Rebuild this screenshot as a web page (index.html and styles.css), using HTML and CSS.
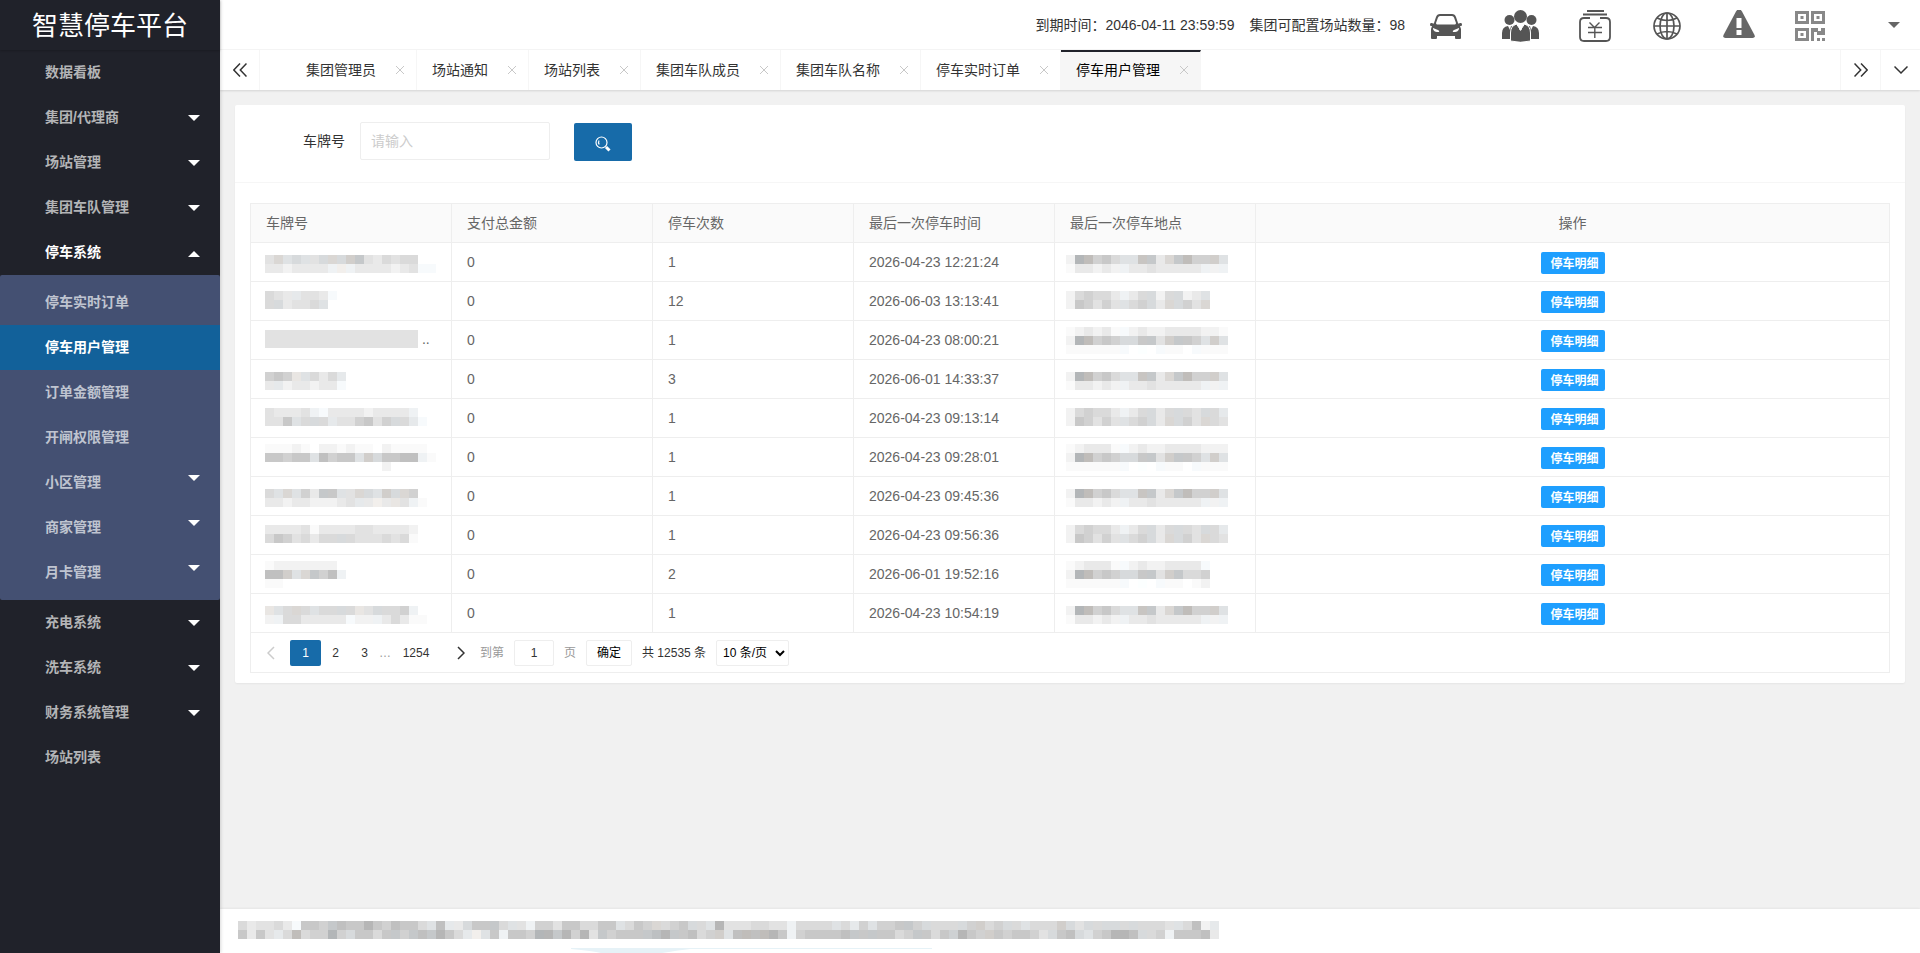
FILE: index.html
```html
<!DOCTYPE html>
<html lang="zh-CN">
<head>
<meta charset="utf-8">
<title>智慧停车平台</title>
<link rel="stylesheet" href="styles.css">
</head>
<body>
<div class="app">
  <aside class="side">
    <h1 class="logo">智慧停车平台</h1>
    <nav class="menu">
      <a class="item" href="#">数据看板</a>
      <a class="item" href="#">集团/代理商<i class="caret"></i></a>
      <a class="item" href="#">场站管理<i class="caret"></i></a>
      <a class="item" href="#">集团车队管理<i class="caret"></i></a>
      <a class="item open" href="#">停车系统<i class="caret up"></i></a>
      <div class="submenu">
        <a class="item" href="#">停车实时订单</a>
        <a class="item current" href="#">停车用户管理</a>
        <a class="item" href="#">订单金额管理</a>
        <a class="item" href="#">开闸权限管理</a>
        <a class="item" href="#">小区管理<i class="caret"></i></a>
        <a class="item" href="#">商家管理<i class="caret"></i></a>
        <a class="item" href="#">月卡管理<i class="caret"></i></a>
      </div>
      <a class="item" href="#">充电系统<i class="caret"></i></a>
      <a class="item" href="#">洗车系统<i class="caret"></i></a>
      <a class="item" href="#">财务系统管理<i class="caret"></i></a>
      <a class="item" href="#">场站列表</a>
    </nav>
  </aside>

  <div class="main">
    <header class="header">
      <span>到期时间：2046-04-11 23:59:59</span>
      <span class="quota">集团可配置场站数量：98</span>
      <div class="tools">
        <a href="#" aria-label="车辆"><svg width="32" height="32" viewBox="0 0 32 32"><path fill="#555" fill-rule="evenodd" d="M10 4h12q3 0 4 3l2 6 1 1 .5-1H31q1 0 1 1.500t-1 1.500h-1l1 3v9q0 1-1 1h-4q-1 0-1-1v-2H7v2q0 1-1 1H2q-1 0-1-1v-9l1-3H1q-1 0-1-1.500T1 13h1.500l.5 1 1-1 2-6q1-3 4-3zM10 6Q8.500 6 8 7.500L6 13q0 1 1 1.500h18q1-.5 1-1.500l-2-5.500Q23.500 6 22 6zM3 18v1q1 3 4 3h2q1-1-1-2zM29 18l-5 2q-2 1-1 2h2q3 0 4-3z"/></svg></a>
        <a href="#" aria-label="用户"><svg width="37" height="32" viewBox="0 0 37 32"><g fill="#555"><circle cx="7.500" cy="10" r="5"/><circle cx="29.500" cy="10" r="5"/><path d="M0 29v-6q0-6 6-7l2 4 1-4 2 1q-3 3-3 12zM37 29v-6q0-6-6-7l-2 4-1-4-2 1q3 3 3 12z"/><path stroke="#fff" d="M8.500 31v-8q0-7 6-9l4 6 4-6q6 2 6 9v8q-10 2.500-20 0z"/><circle cx="18.500" cy="6.500" r="6.500"/><path fill="#fff" d="M17.700 14h1.600l.7 5-1.500 2-1.500-2z"/></g></svg></a>
        <a href="#" aria-label="收款"><svg width="32" height="32" viewBox="0 0 32 32"><g fill="none" stroke="#555" stroke-width="1.800"><path d="M8 1h17M4 4.500h24M11 8H5q-4 0-4 4v15q0 4 4 4h22q4 0 4-4V12q0-4-4-4h-6"/><path stroke-width="1.400" d="M10.500 12.500l5 5 5-5M9 17.500h14M9 22.500h14M15.800 17v11"/></g></svg></a>
        <a href="#" aria-label="语言"><svg width="32" height="32" viewBox="0 0 32 32"><g fill="none" stroke="#555" stroke-width="1.700"><circle cx="16" cy="16" r="13"/><ellipse cx="16" cy="16" rx="7" ry="13"/><path d="M16 3v26M3 16h26M6 8q10 5 20 0M6 24q10-5 20 0"/></g></svg></a>
        <a href="#" aria-label="告警"><svg width="32" height="32" viewBox="0 0 32 32"><path fill="#666" d="M13 1.500q3-5 6 0L31.500 25q1 3-2 3h-27q-3 0-2-3z"/><path fill="#fff" d="M13.500 8h5v10h-5zM13.500 20h5v5h-5z"/></svg></a>
        <a href="#" aria-label="二维码"><svg width="30" height="32" viewBox="0 0 30 32"><path fill="#888" fill-rule="evenodd" d="M0 1h14v13H0zM3 4v7h8V4zM16 1h14v13H16zM19 4v7h8V4zM0 18h14v13H0zM3 21v7h8v-7zM5.500 6h3v3h-3zM21.500 6h3v3h-3zM5.500 23h3v3h-3zM16 18h7v3h3v-3h4v7h-8v-3h-3v9h-3zM22 28h3v3h-3zM27 28h3v3h-3z"/></svg></a>
      </div>
      <i class="user-caret"></i>
    </header>

    <div class="tabs">
      <button class="tab-btn left" aria-label="左移"><svg width="14" height="14" viewBox="0 0 14 14"><path d="M7 .5L.8 7 7 13.500M13.500 .5L7.300 7l6.200 6.500"/></svg></button>
      <div class="tab-list">
        <a class="tab" href="#">集团管理员<svg class="x" viewBox="0 0 8 8"><path d="M0 0l8 8M8 0L0 8"/></svg></a>
        <a class="tab" href="#">场站通知<svg class="x" viewBox="0 0 8 8"><path d="M0 0l8 8M8 0L0 8"/></svg></a>
        <a class="tab" href="#">场站列表<svg class="x" viewBox="0 0 8 8"><path d="M0 0l8 8M8 0L0 8"/></svg></a>
        <a class="tab" href="#">集团车队成员<svg class="x" viewBox="0 0 8 8"><path d="M0 0l8 8M8 0L0 8"/></svg></a>
        <a class="tab" href="#">集团车队名称<svg class="x" viewBox="0 0 8 8"><path d="M0 0l8 8M8 0L0 8"/></svg></a>
        <a class="tab" href="#">停车实时订单<svg class="x" viewBox="0 0 8 8"><path d="M0 0l8 8M8 0L0 8"/></svg></a>
        <a class="tab active" href="#">停车用户管理<svg class="x" viewBox="0 0 8 8"><path d="M0 0l8 8M8 0L0 8"/></svg></a>
      </div>
      <button class="tab-btn" aria-label="右移"><svg width="14" height="14" viewBox="0 0 14 14"><path d="M.5 .5L6.700 7 .5 13.500M7 .5L13.200 7 7 13.500"/></svg></button>
      <button class="tab-btn" aria-label="更多"><svg width="14" height="14" viewBox="0 0 14 14"><path d="M.5 3.500L7 10l6.500-6.500"/></svg></button>
    </div>

    <main class="content">
      <section class="card">
        <form class="search">
          <label for="plate">车牌号</label>
          <input id="plate" type="text" placeholder="请输入">
          <button type="button" aria-label="搜索"><svg width="16" height="16" viewBox="0 0 16 16"><circle cx="6.500" cy="6.500" r="5.500"/><path d="M4 4.500Q3 6.500 4.200 8.500"/><path class="handle" d="M11 11l3.500 3.500"/></svg></button>
        </form>
        <div class="list">
          <table>
            <thead>
              <tr><th class="col">车牌号</th><th class="col">支付总金额</th><th class="col">停车次数</th><th class="col">最后一次停车时间</th><th class="col">最后一次停车地点</th><th class="act">操作</th></tr>
            </thead>
            <tbody>
              <tr><td class="plate"><svg class="mask" data-top="6" data-cells="4Fefe4fFfGh435455/3323333cCc3333234bb"></svg></td><td>0</td><td>1</td><td>2026-04-23 12:21:24</td><td class="place"><svg class="mask" data-top="6" data-cells="2jI675eeHh3FhI66Ge/133232c33433333c2c"></svg></td><td class="act"><button class="detail">停车明细</button></td></tr>
              <tr><td class="plate"><svg class="mask" data-top="3" data-cells="543d443b/5f3445e"></svg></td><td>0</td><td>12</td><td>2026-06-03 13:13:41</td><td class="place"><svg class="mask" data-top="3" data-cells="256553c35f25f23e/276464e56f3Ff64F"></svg></td><td class="act"><button class="detail">停车明细</button></td></tr>
              <tr><td class="plate"><svg class="mask" data-top="3" data-cells="44444444444444444/44444444444444444"></svg> ..</td><td>0</td><td>1</td><td>2026-04-23 08:00:21</td><td class="place"><svg class="mask" data-top="0" data-cells="123231b23223333221/2jI676ff7h4Gh76eGe/111111b0a0b110b111"></svg></td><td class="act"><button class="detail">停车明细</button></td></tr>
              <tr><td class="plate"><svg class="mask" data-top="6" data-cells="676De535d/3d233233b"></svg></td><td>0</td><td>3</td><td>2026-06-01 14:33:37</td><td class="place"><svg class="mask" data-top="6" data-cells="2jI675eeHh3FhI66Ge/133232c33433333c2c"></svg></td><td class="act"><button class="detail">停车明细</button></td></tr>
              <tr><td class="plate"><svg class="mask" data-top="3" data-cells="43334cb333323333c/447e5f5d446746f5db"></svg></td><td>0</td><td>1</td><td>2026-04-23 09:13:14</td><td class="place"><svg class="mask" data-top="3" data-cells="256553c35f35f54f5d/276464e56f3Ff64F54"></svg></td><td class="act"><button class="detail">停车明细</button></td></tr>
              <tr><td class="plate"><svg class="mask" data-top="0" data-cells="1112102212110211110/77677e8677eGf7788c1/0000000000000200000"></svg></td><td>0</td><td>1</td><td>2026-04-23 09:28:01</td><td class="place"><svg class="mask" data-top="0" data-cells="123331b23223333222/2jI676ff7h4Gh76eGe/111111b0a0b110b111"></svg></td><td class="act"><button class="detail">停车明细</button></td></tr>
              <tr><td class="plate"><svg class="mask" data-top="6" data-cells="5eFe63h7e4FfeGfF6/3323322234d3C3D4c1"></svg></td><td>0</td><td>1</td><td>2026-04-23 09:45:36</td><td class="place"><svg class="mask" data-top="6" data-cells="2jI675eeHh3FhI66Ge/133232c33433333c2c"></svg></td><td class="act"><button class="detail">停车明细</button></td></tr>
              <tr><td class="plate"><svg class="mask" data-top="3" data-cells="33334133334433332/57645355f54445451"></svg></td><td>0</td><td>1</td><td>2026-04-23 09:56:36</td><td class="place"><svg class="mask" data-top="3" data-cells="256553c35f35f54f5d/276464e56f3Ff64F54"></svg></td><td class="act"><button class="detail">停车明细</button></td></tr>
              <tr><td class="plate"><svg class="mask" data-top="0" data-cells="12222222/88GeFh68c/11"></svg></td><td>0</td><td>2</td><td>2026-06-01 19:52:16</td><td class="place"><svg class="mask" data-top="0" data-cells="123331b23223333b/2jI676ff7h4Gh556/111111b0a0b11012"></svg></td><td class="act"><button class="detail">停车明细</button></td></tr>
              <tr><td class="plate"><svg class="mask" data-top="6" data-cells="De5F5e55f5D4f556c/2c5533333b22c35311"></svg></td><td>0</td><td>1</td><td>2026-04-23 10:54:19</td><td class="place"><svg class="mask" data-top="6" data-cells="2jI675eeHh3FhI66Ge/133232c33433333c2c"></svg></td><td class="act"><button class="detail">停车明细</button></td></tr>
            </tbody>
          </table>
          <div class="pager">
            <a class="arrow prev" href="#" aria-label="上一页"><svg width="8" height="14" viewBox="0 0 8 14"><path d="M7 1L1 7l6 6"/></svg></a>
            <a class="page on" href="#">1</a>
            <a class="page" href="#">2</a>
            <a class="page" href="#">3</a>
            <span class="dots">…</span>
            <a class="page last" href="#">1254</a>
            <a class="arrow next" href="#" aria-label="下一页"><svg width="8" height="14" viewBox="0 0 8 14"><path d="M1 1l6 6-6 6"/></svg></a>
            <label class="skip">到第<input type="text" value="1">页</label>
            <button class="go">确定</button>
            <span class="total">共 12535 条</span>
            <select aria-label="每页条数"><option>10 条/页</option></select>
          </div>
        </div>
      </section>
    </main>

    <footer class="footer">
      <svg class="mask" data-top="0" data-cells="534453b776h8779768775e8d3f77h5e4c664775577e576F567f5e94445544c5555e5d6e667h6f555f6G56f5e555Gf4f5ff5f5554e582d/7374d5I566j6f7757h6h8h975dCe7c776j9h9694h6777hi9h7856Ge8I8I97c677778h7h7756h757g976G767764f78fe67998f56c77783"></svg>
      <svg class="wave" width="361" height="5" viewBox="0 0 361 5"><path fill="#e6f2f7" d="M0 0h361v1H119q-10 1-28 4H30Q22 3 0 1z"/></svg>
    </footer>
  </div>
</div>
<script src="mask.js"></script>
</body>
</html>
```
FILE: styles.css
```css
* { box-sizing: border-box; }
body {
  margin: 0;
  font: 14px/24px "Liberation Sans", "Noto Sans CJK SC", sans-serif;
  color: #333;
  background: #f1f1f1;
}
a { color: inherit; text-decoration: none; }
button, input, select { font: inherit; margin: 0; }
button { cursor: pointer; }

.app { display: grid; grid-template-columns: 220px minmax(0, 1fr); min-height: 100vh; }

/* Sidebar */
.side { background: #20222a; box-shadow: 1px 0 3px rgba(0, 0, 0, .15); z-index: 1; }
.logo {
  margin: 0;
  height: 50px;
  padding-top: 2px;
  font-size: 26px;
  line-height: 48px;
  font-weight: 400;
  text-align: center;
  color: #fff;
  box-shadow: 0 1px 2px rgba(0, 0, 0, .2);
}
.item {
  display: flex;
  align-items: center;
  justify-content: space-between;
  height: 45px;
  padding: 0 20px 2px 45px;
  color: #b3b4b6;
  font-weight: 600;
}
.item.open { color: #fff; }
.caret { border: 6px solid transparent; border-top-color: #fff; border-bottom-width: 0; margin-top: 2px; }
.caret.up { border-bottom: 6px solid #fff; border-top-width: 0; margin-top: 5px; }
.submenu { padding: 5px 0; background: #445072; border-radius: 2px; }
.submenu .item { color: #bfc4d0; }
.submenu .item.current { color: #fff; background: #12619a; }
.submenu .caret { margin: 0 0 8px; }

/* Top bar */
.main { display: flex; flex-direction: column; min-width: 0; }
.header {
  display: flex;
  align-items: center;
  height: 50px;
  padding-right: 20px;
  justify-content: flex-end;
  background: #fff;
  border-bottom: 1px solid #f6f6f6;
}
.quota { margin-left: 15px; }
.tools { display: flex; gap: 40px; margin-left: 25px; padding-top: 2px; }
.tools a { display: flex; }
.user-caret { margin-left: 63px; border: 6px solid transparent; border-top-color: #666; border-bottom-width: 0; }

/* Tab strip */
.tabs { display: flex; height: 40px; background: #fff; box-shadow: 0 1px 2px rgba(0, 0, 0, .12); }
.tab-btn {
  width: 40px;
  padding: 0;
  display: flex;
  align-items: center;
  justify-content: center;
  background: none;
  border: 0;
  border-left: 1px solid #f6f6f6;
}
.tab-btn.left { border-left: 0; border-right: 1px solid #f6f6f6; }
.tab-btn path { fill: none; stroke: #333; stroke-width: 1.500; }
.tab-list { flex: 1; display: flex; padding-left: 31px; }
.tab {
  display: flex;
  align-items: center;
  padding: 0 12px 0 15px;
  border-right: 1px solid #f6f6f6;
}
.tab.active { background: #f6f6f6; color: #000; border-top: 2px solid #20222a; padding-bottom: 2px; }
.x { width: 8px; height: 8px; margin-left: 20px; overflow: visible; }
.x path { stroke: #c8c8c8; }

/* Card */
.content { flex: 1; padding: 15px; }
.card { background: #fff; border-radius: 2px; box-shadow: 0 1px 2px rgba(0, 0, 0, .05); }
.search { display: flex; padding: 17px 0 21px 68px; border-bottom: 1px solid #f6f6f6; }
.search label { line-height: 38px; }
.search input {
  width: 190px;
  height: 38px;
  margin-left: 15px;
  padding: 0 10px;
  border: 1px solid #eee;
  border-radius: 2px;
}
.search input::placeholder { color: #ccc; }
.search button {
  display: flex;
  align-items: center;
  justify-content: center;
  width: 58px;
  height: 38px;
  margin: 1px 0 0 24px;
  padding: 3px 0 0;
  border: 0;
  border-radius: 2px;
  background: #176ba9;
}
.search svg { fill: none; stroke: #fff; stroke-width: 1.200; }
.search .handle { stroke-width: 3; }
.list { padding: 20px 15px 10px; }

table { width: 100%; border-collapse: collapse; table-layout: fixed; color: #666; }
th, td { height: 39px; padding: 0 15px; border: 1px solid #eee; text-align: left; white-space: nowrap; line-height: 20px; }
th { font-weight: 400; background: #fafafa; }
.col { width: 201px; }
th.act, td.act { width: auto; text-align: center; }
.plate { padding: 0 0 0 14px; }
.place { padding: 0 0 0 11px; }
.mask { display: inline-block; vertical-align: middle; width: 0; height: 26px; overflow: visible; }
.detail {
  display: block;
  width: 64px;
  height: 22px;
  margin: 2px auto 0;
  padding: 1px 6px 0 10px;
  border: 0;
  border-radius: 2px;
  background: #1e9fff;
  color: #fff;
  font-size: 12px;
  line-height: 20px;
  font-weight: 600;
}

.pager {
  display: flex;
  align-items: center;
  height: 40px;
  border: 1px solid #eee;
  border-top: 0;
  font-size: 12px;
}
.pager path { fill: none; stroke: #333; stroke-width: 1.500; }
.pager .prev path { stroke: #ccc; }
.arrow { display: flex; justify-content: center; width: 39px; }
.page { width: 29px; height: 26px; line-height: 26px; text-align: center; }
.page.on { width: 31px; background: #176ba9; color: #fff; border-radius: 2px; }
.page.last { width: 50px; }
.dots { width: 12px; text-align: center; color: #999; }
.skip { display: flex; align-items: center; color: #999; }
.skip input { width: 40px; height: 26px; margin: 0 10px; padding: 0; text-align: center; color: #333; border: 1px solid #eee; border-radius: 2px; }
.go { width: 46px; height: 26px; margin-left: 10px; padding: 0; border: 1px solid #eee; border-radius: 2px; background: #fff; color: #000; }
.total { margin: 0 10px; }
.pager select { width: 73px; height: 26px; padding: 0 2px; border: 1px solid #eee; border-radius: 2px; background: #fff; color: #000; }

.footer { display: flex; flex-direction: column; height: 44px; padding: 12px 0 0 18px; background: #fff; box-shadow: 0 -1px 2px rgba(0, 0, 0, .05); }
.footer .mask { height: 18px; }
.wave { margin: 9px 0 0 333px; }
```
FILE: mask.js
```js
// Draws masked values as 9px blocks. Digits are neutral tones,
// lowercase letters cool tones, uppercase letters warm tones.
const SIZE = 9;
const LEVELS = [255, 250, 242, 233, 226, 218, 209, 200, 192, 182];

function tone(ch) {
  if (/\d/.test(ch)) {
    const v = LEVELS[ch];
    return `rgb(${v},${v},${v})`;
  }
  const v = LEVELS[ch.toLowerCase().charCodeAt(0) - 97];
  return ch < 'a' ? `rgb(${v},${v - 3},${v - 6})` : `rgb(${v - 3},${v},${v + 2})`;
}

document.querySelectorAll('.mask').forEach(svg => {
  const rows = svg.dataset.cells.split('/');
  const top = Number(svg.dataset.top);
  svg.style.width = rows[0].length * SIZE + 'px';
  rows.forEach((row, y) => [...row].forEach((ch, x) => {
    const r = document.createElementNS('http://www.w3.org/2000/svg', 'rect');
    r.setAttribute('x', x * SIZE);
    r.setAttribute('y', top + y * SIZE);
    r.setAttribute('width', SIZE);
    r.setAttribute('height', SIZE);
    r.setAttribute('fill', tone(ch));
    svg.append(r);
  }));
});
```
